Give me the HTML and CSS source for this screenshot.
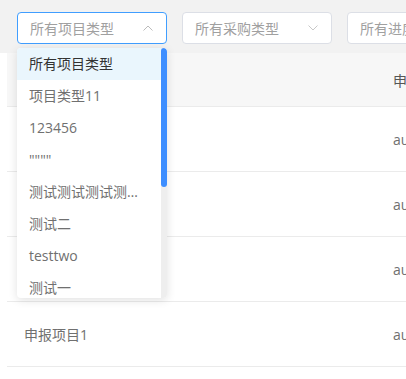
FILE: index.html
```html
<!DOCTYPE html>
<html lang="zh-CN">
<head>
  <meta charset="UTF-8" />
  <meta name="viewport" content="width=device-width, initial-scale=1.0"/>
  <title>项目列表</title>
  <link rel="stylesheet" href="styles.css">
</head>
<body>
  <div class="filter-bar">
    <div class="select is-open">
      <span>所有项目类型</span>
      <svg class="arrow" width="10" height="6" viewBox="0 0 10 6"><path d="M0.5 5.5 L5 1 L9.5 5.5" fill="none" stroke="#bbb" stroke-width="1"/></svg>
    </div>
    <div class="select">
      <span>所有采购类型</span>
      <svg class="arrow" width="10" height="6" viewBox="0 0 10 6"><path d="M0.5 0.5 L5 5 L9.5 0.5" fill="none" stroke="#c8c8c8" stroke-width="1"/></svg>
    </div>
    <div class="select">
      <span>所有进度状态</span>
      <svg class="arrow" width="10" height="6" viewBox="0 0 10 6"><path d="M0.5 0.5 L5 5 L9.5 0.5" fill="none" stroke="#c8c8c8" stroke-width="1"/></svg>
    </div>
  </div>

  <!-- first column of the upper rows sits under the open dropdown -->
  <div class="table">
    <div class="row head">
      <div class="cell"></div>
      <div class="cell">申报人</div>
    </div>
    <div class="row">
      <div class="cell"></div>
      <div class="cell">autotest</div>
    </div>
    <div class="row">
      <div class="cell"></div>
      <div class="cell">autotest</div>
    </div>
    <div class="row">
      <div class="cell"></div>
      <div class="cell">autotest</div>
    </div>
    <div class="row">
      <div class="cell">申报项目1</div>
      <div class="cell">autotest</div>
    </div>
  </div>

  <div class="dropdown">
    <ul class="options">
      <li class="selected">所有项目类型</li>
      <li>项目类型11</li>
      <li>123456</li>
      <li>""""</li>
      <li>测试测试测试测试测试</li>
      <li>测试二</li>
      <li>testtwo</li>
      <li>测试一</li>
    </ul>
    <div class="scroll-track"><div class="scroll-thumb"></div></div>
  </div>
</body>
</html>
```
FILE: styles.css
```css
* {
  box-sizing: border-box;
}

body, html {
  margin: 0;
  height: 100%;
  overflow: hidden;
  font-family: "Open Sans", "Noto Sans CJK SC", sans-serif;
  font-size: 14px;
  color: #707070;
  background-color: #fff;
}

.filter-bar {
  display: flex;
  gap: 15px;
  padding: 12px 0 9px 17px;
  background-color: #f2f2f2;
  white-space: nowrap;
  overflow: hidden;
}

.select {
  flex: 0 0 150px;
  height: 32px;
  display: flex;
  align-items: center;
  justify-content: space-between;
  padding: 0 12px;
  background-color: #fff;
  border: 1px solid #dcdfe6;
  border-radius: 4px;
  color: #a0a0a0;
}

.select.is-open {
  border-color: #409eff;
}

.arrow {
  margin-right: 1px;
}

.table {
  margin-left: 7px;
}

.row {
  display: grid;
  grid-template-columns: 374px 1fr;
  height: 65px;
  align-items: center;
  border-bottom: 1px solid #ebebeb;
  white-space: nowrap;
  overflow: hidden;
}

.row.head {
  height: 54px;
  background-color: #f7f7f7;
  color: #555;
}

.cell {
  padding: 0 12px 0 17px;
  overflow: hidden;
}

.cell + .cell {
  padding-left: 12px;
}

.dropdown {
  position: absolute;
  top: 48px;
  left: 17px;
  width: 150px;
  height: 250px;
  background-color: #fff;
  border-radius: 4px;
  box-shadow: 0 2px 10px rgba(0, 0, 0, 0.12);
  overflow: hidden;
}

.options {
  list-style: none;
  margin: 0;
  padding: 0;
}

.options li {
  height: 32px;
  line-height: 32px;
  padding: 0 18px 0 12px;
  white-space: nowrap;
  overflow: hidden;
  text-overflow: ellipsis;
  color: #707070;
}

.options li.selected {
  background-color: #eaf6fd;
  color: #333;
}

.scroll-track {
  position: absolute;
  top: 0;
  right: 0;
  bottom: 0;
  width: 6px;
  background-color: #eee;
}

.scroll-thumb {
  height: 139px;
  border-radius: 3px;
  background-color: #3d8eff;
}
```
